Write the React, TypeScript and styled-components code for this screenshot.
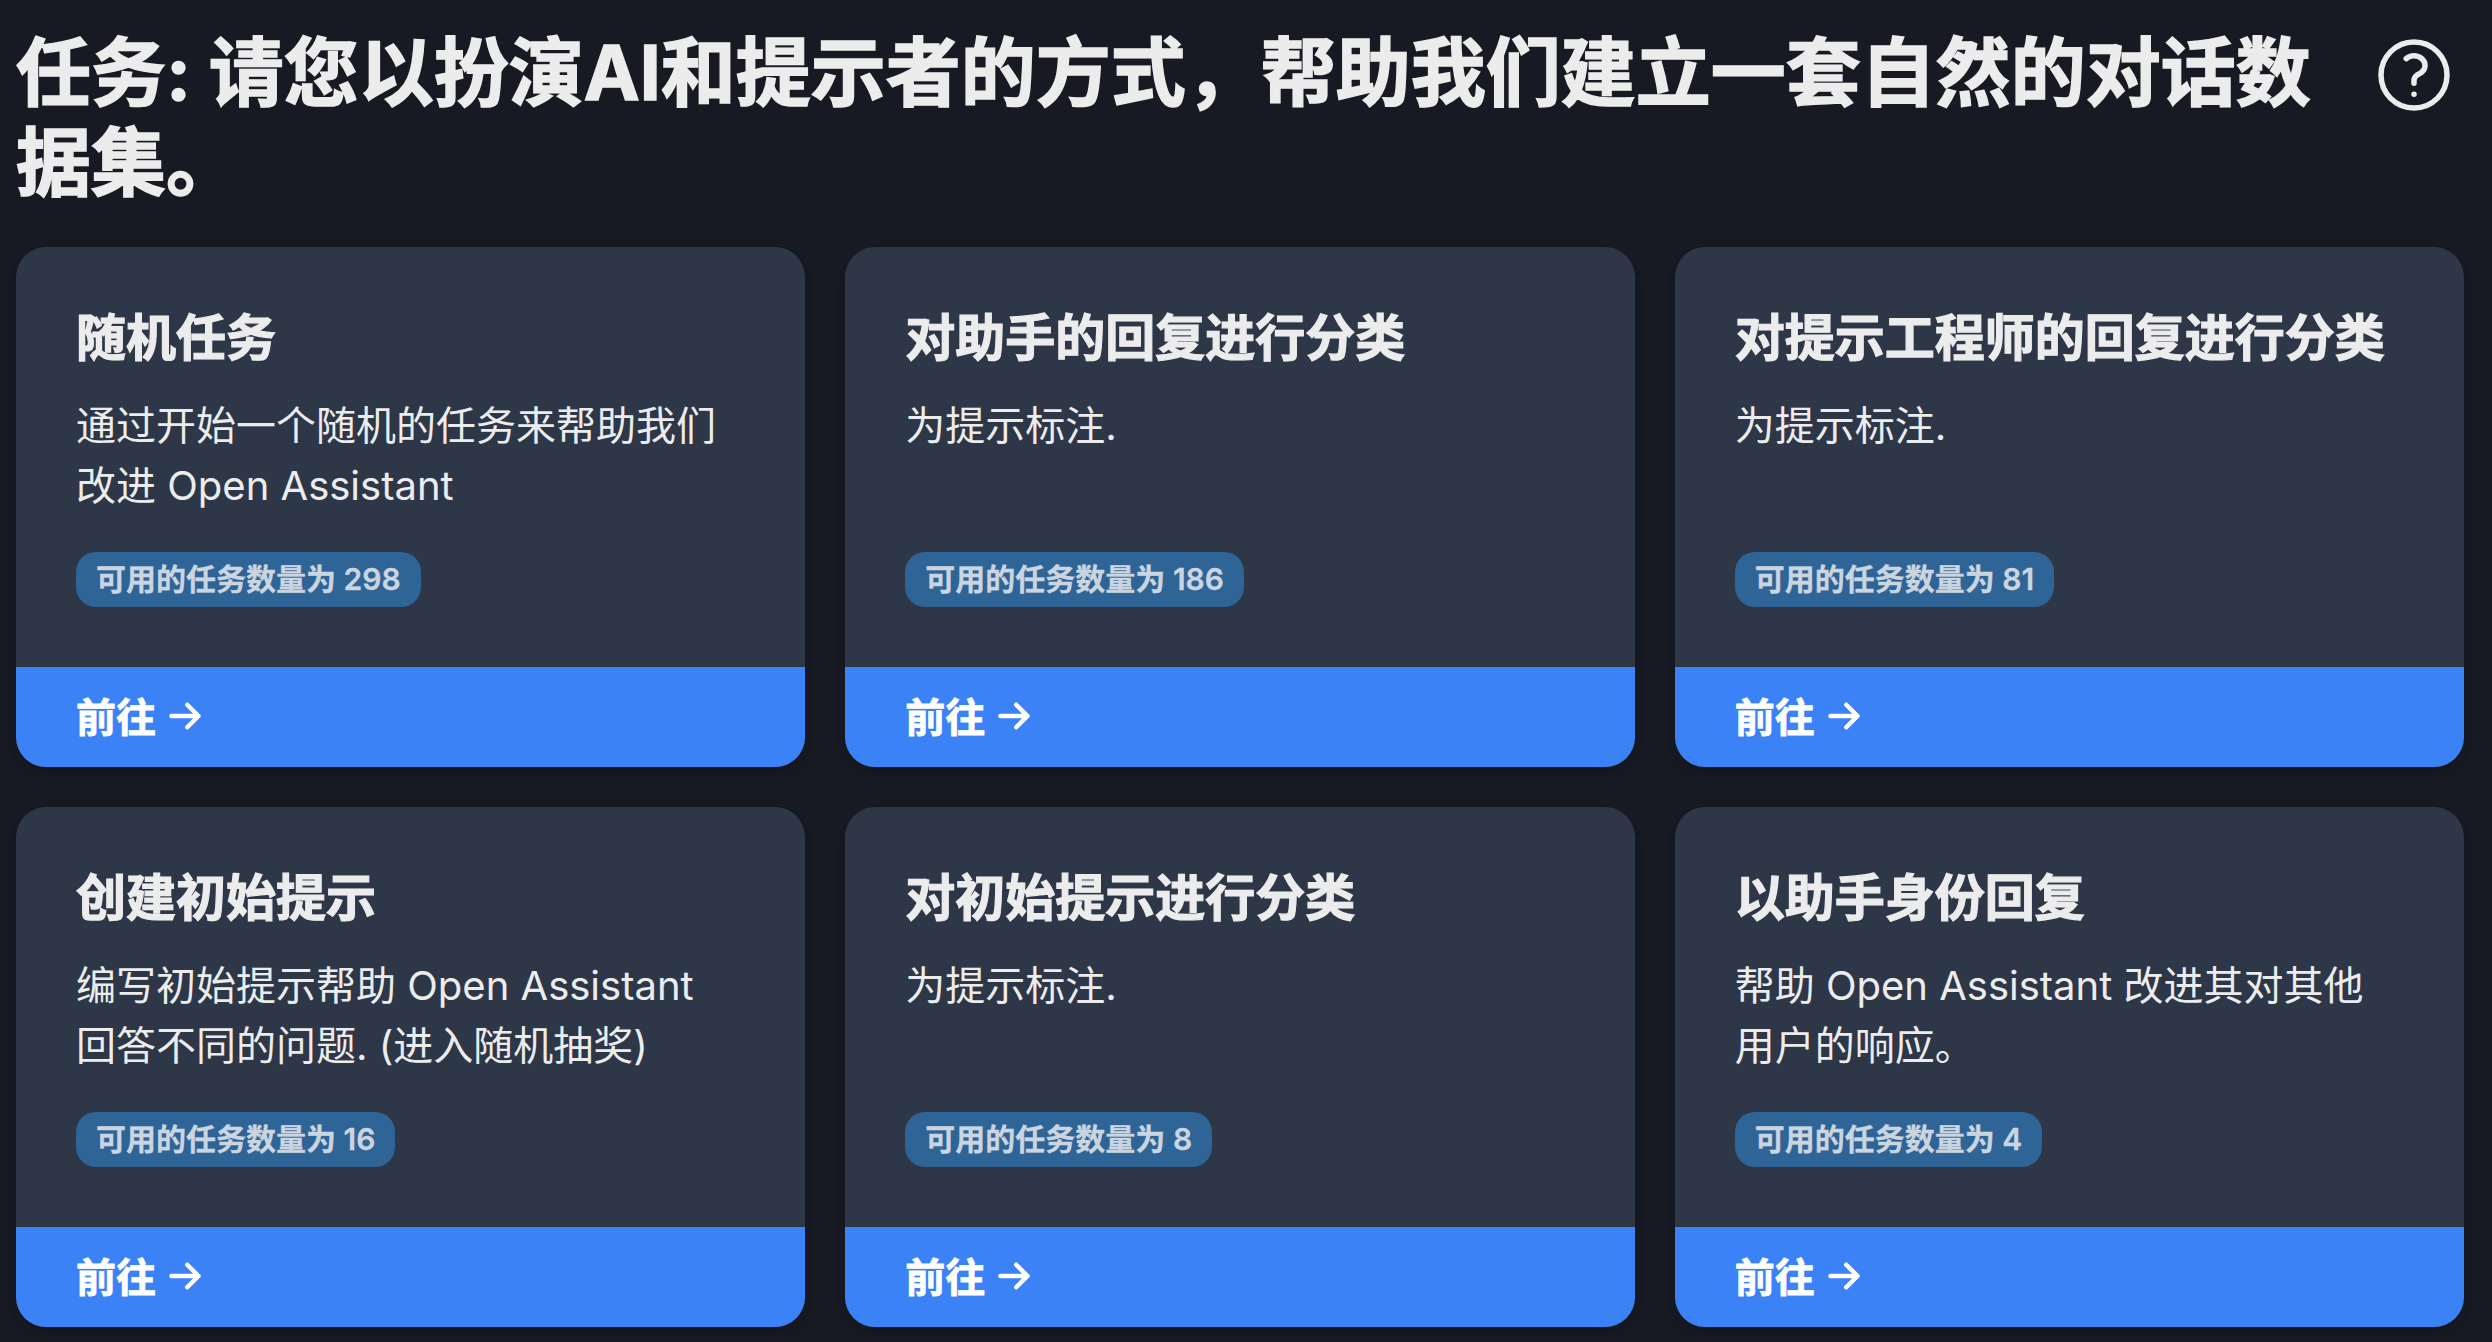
import styled, { createGlobalStyle } from 'styled-components';
import { HiOutlineArrowRight, HiOutlineQuestionMarkCircle } from 'react-icons/hi2';

const tasks = [
  {
    title: '随机任务',
    description: '通过开始一个随机的任务来帮助我们改进 Open Assistant',
    count: 298,
  },
  { title: '对助手的回复进行分类', description: '为提示标注.', count: 186 },
  { title: '对提示工程师的回复进行分类', description: '为提示标注.', count: 81 },
  {
    title: '创建初始提示',
    description: '编写初始提示帮助 Open Assistant 回答不同的问题. (进入随机抽奖)',
    count: 16,
  },
  { title: '对初始提示进行分类', description: '为提示标注.', count: 8 },
  {
    title: '以助手身份回复',
    description: '帮助 Open Assistant 改进其对其他用户的响应。',
    count: 4,
  },
];

const App = () => {
  return (
    <>
      <GlobalStyle />
      <Page>
        <Header>
          <Title>任务: 请您以扮演AI和提示者的方式，帮助我们建立一套自然的对话数据集。</Title>
          <HelpIcon />
        </Header>
        <Grid>
          {tasks.map((task) => (
            <Card key={task.title}>
              <CardBody>
                <CardTitle>{task.title}</CardTitle>
                <CardText>{task.description}</CardText>
                <Badge>可用的任务数量为 {task.count}</Badge>
              </CardBody>
              <CardAction>
                前往 <HiOutlineArrowRight />
              </CardAction>
            </Card>
          ))}
        </Grid>
      </Page>
    </>
  );
};

export default App;

const GlobalStyle = createGlobalStyle`
  html, body {
    margin: 0;
    background-color: #171a22;
  }

  body {
    font-family: Inter, "Noto Sans CJK SC", sans-serif;
    color: #ececec;
  }
`;

const Page = styled.div`
  box-sizing: border-box;
  height: 1342px;
  overflow: hidden;
  padding: 28px 28px 0 16px;
  display: flex;
  flex-direction: column;
  gap: 38.67px;
`;

const Header = styled.header`
  display: flex;
  justify-content: space-between;
  align-items: flex-start;
  gap: 40px;
`;

const Title = styled.h1`
  margin: 0;
  flex: 1;
  font-size: 75px;
  line-height: 90px;
  font-weight: 700;
  color: #ececec;
  -webkit-text-stroke: 1.5px #ececec;
`;

const HelpIcon = styled(HiOutlineQuestionMarkCircle)`
  flex-shrink: 0;
  width: 88px;
  height: 88px;
  margin: 3px 6px 0 0;
  color: #ececec;
`;

const Grid = styled.div`
  display: grid;
  grid-template-columns: repeat(3, 1fr);
  gap: 40px;
`;

const Card = styled.article`
  display: flex;
  flex-direction: column;
  border-radius: 30px;
  overflow: hidden;
  background-color: #2d3748;
  box-shadow: 0 10px 15px -5px rgba(0, 0, 0, 0.1), 0 4px 10px -2px rgba(0, 0, 0, 0.1);
`;

const CardBody = styled.div`
  display: flex;
  flex-direction: column;
  align-items: flex-start;
  padding: 60px;
  height: 420px;
  box-sizing: border-box;
`;

const CardTitle = styled.h2`
  margin: 0 0 26px;
  font-size: 50px;
  line-height: 63px;
  font-weight: 700;
  color: #ececec;
  -webkit-text-stroke: 1.2px #ececec;
`;

const CardText = styled.p`
  flex: 1;
  max-width: 650px;
  margin: 0;
  font-size: 40px;
  line-height: 60px;
  font-weight: 400;
  color: #ececec;
`;

const Badge = styled.span`
  padding: 0 20px;
  border-radius: 20px;
  font-size: 30px;
  line-height: 55px;
  font-weight: 600;
  color: #cbd5e0;
  background-color: #2e6496;
  -webkit-text-stroke: 0.3px #cbd5e0;
`;

const CardAction = styled.div`
  display: flex;
  align-items: center;
  gap: 11px;
  height: 100px;
  padding: 0 60px 4px;
  box-sizing: border-box;
  font-size: 40px;
  font-weight: 700;
  color: #ffffff;
  background-color: #3b82f6;
  -webkit-text-stroke: 0.8px #ffffff;

  svg {
    width: 36px;
    height: 36px;
    margin-top: 3px;
  }

  svg path {
    stroke-width: 3;
  }
`;
